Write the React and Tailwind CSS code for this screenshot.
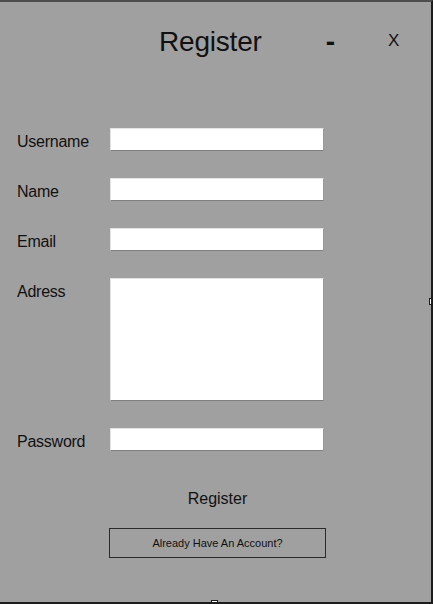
import { useState } from "react";

const fields = [
  { key: "username", label: "Username" },
  { key: "name", label: "Name" },
  { key: "email", label: "Email" },
  { key: "address", label: "Adress", multiline: true },
  { key: "password", label: "Password", type: "password" },
];

const boxClass =
  "w-[214px] bg-white border border-t-[#e3e3e3] border-l-[#e3e3e3] border-b-[#7f7f7f] border-r-[#9a9a9a] outline-none px-1 text-[13px]";

export default function App() {
  const [form, setForm] = useState({});

  const update = (key, value) => setForm((prev) => ({ ...prev, [key]: value }));

  return (
    <div className="relative w-[433px] h-[604px] overflow-hidden bg-[#a0a0a0] border-t-2 border-t-[#4d4d4d] border-r-2 border-r-[#1c1c1c] border-b-2 border-b-[#1c1c1c] font-['Liberation_Sans',Arial,sans-serif] text-[#111]">
      {/* Header */}
      <header className="flex items-center pt-[24px] pl-[159px] h-[56px] leading-[32px]">
        <h1 className="text-[28px] leading-[32px] tracking-[-0.2px]">Register</h1>
        <button className="ml-[64px] text-[28px] leading-[32px] font-bold">-</button>
        <button className="ml-[53px] text-[17px] leading-[32px] mt-[-2px]">X</button>
      </header>

      {/* Fields */}
      <form
        className="flex flex-col gap-[27px] mt-[70px] pl-[17px]"
        onSubmit={(e) => e.preventDefault()}
      >
        {fields.map((f) => (
          <div
            key={f.key}
            className={`flex ${f.multiline ? "items-start" : "items-center"}`}
          >
            <label className="w-[93px] translate-y-[2px] text-[16px] leading-[23px] tracking-[-0.25px]">
              {f.label}
            </label>
            {f.multiline ? (
              <textarea
                value={form[f.key] || ""}
                onChange={(e) => update(f.key, e.target.value)}
                className={`${boxClass} h-[123px] resize-none`}
              />
            ) : (
              <input
                type={f.type || "text"}
                value={form[f.key] || ""}
                onChange={(e) => update(f.key, e.target.value)}
                className={`${boxClass} h-[23px]`}
              />
            )}
          </div>
        ))}

        <div className="flex flex-col items-start pl-[92px] -mt-[27px]">
          <button
            type="submit"
            className="w-[217px] mt-[36px] text-[16px] leading-[23px] text-center"
          >
            Register
          </button>
          <button
            type="button"
            className="w-[217px] h-[30px] mt-[18px] border border-[#2a2a2a] text-[11px] text-center"
          >
            Already Have An Account?
          </button>
        </div>
      </form>

      {/* resize handles */}
      <div className="absolute right-[-2px] top-[296px] w-[4px] h-[7px] bg-white border border-[#1c1c1c]" />
      <div className="absolute bottom-[-3px] left-[211px] w-[7px] h-[5px] bg-white border border-[#1c1c1c]" />
    </div>
  );
}
